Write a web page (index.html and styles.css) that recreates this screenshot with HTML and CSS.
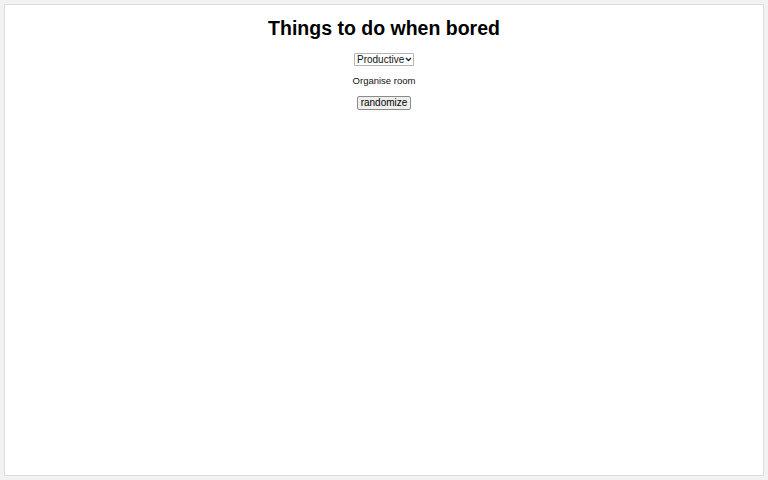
FILE: index.html
```html
<!DOCTYPE html>
<html lang="en">
<head>
    <meta charset="UTF-8">
    <meta name="viewport" content="width=device-width, initial-scale=1.0">
    <title>Things to do when bored</title>
    <link rel="stylesheet" href="styles.css">
</head>
<body>
    <div class="container">
        <h1>Things to do when bored</h1>
        <div class="picker">
            <select id="category">
                <option value="productive">Productive</option>
                <option value="fun">Fun</option>
                <option value="relaxing">Relaxing</option>
            </select>
            <!-- dropdown chevron -->
            <svg class="chevron" width="7" height="5" viewBox="0 0 7 5">
                <path d="M1 1 L3.5 3.5 L6 1" fill="none" stroke="#222" stroke-width="1.3"/>
            </svg>
        </div>
        <p id="idea">Organise room</p>
        <button id="randomize">randomize</button>
    </div>
</body>
</html>
```

FILE: styles.css
```css
* {
    margin: 0;
    padding: 0;
    box-sizing: border-box;
    font-family: "Liberation Sans", Arial, sans-serif;
}

body {
    background: #f2f2f2;
    padding: 4px;
    height: 480px;
}

.container {
    height: 472px;
    background: white;
    border: 1px solid #dcdcdc;
    display: flex;
    flex-direction: column;
    align-items: center;
    padding-top: 12px;
}

h1 {
    font-size: 19.5px;
    line-height: 22px;
    font-weight: bold;
    color: #000;
    margin-bottom: 14px;
}

.picker {
    position: relative;
    height: 13px;
}

select {
    appearance: none;
    -webkit-appearance: none;
    display: block;
    width: 60px;
    height: 13px;
    font-size: 10px;
    line-height: 11px;
    color: #111;
    border: 1px solid #b5b5b5;
    border-radius: 1px;
    background: white;
    padding: 0 0 0 2px;
}

.chevron {
    position: absolute;
    right: 2px;
    top: 4px;
    pointer-events: none;
}

p {
    font-size: 9.5px;
    line-height: 12px;
    color: #111;
    margin: 9px 0 9px;
}

button {
    width: 54px;
    height: 14px;
    font-size: 10px;
    line-height: 12px;
    color: #000;
    padding: 0;
    background: #efefef;
    border: 1px solid #8a8a8a;
    border-radius: 2px;
}
```
